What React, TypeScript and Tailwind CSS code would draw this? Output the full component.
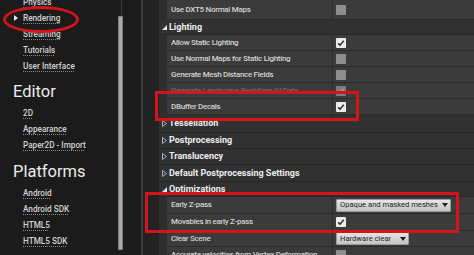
import React from 'react';

type Row =
  | { kind: 'header'; label: string; open?: boolean; h: number }
  | { kind: 'prop'; label: string; h: number; value?: 'on' | 'off' | 'dim' | 'none'; faded?: boolean; dropdown?: string; ddWidth?: number };

const rows: Row[] = [
  { kind: 'prop', label: 'Use DXT5 Normal Maps', h: 20, value: 'off' },
  { kind: 'header', label: 'Lighting', open: true, h: 15 },
  { kind: 'prop', label: 'Allow Static Lighting', h: 16, value: 'on' },
  { kind: 'prop', label: 'Use Normal Maps for Static Lighting', h: 16, value: 'off' },
  { kind: 'prop', label: 'Generate Mesh Distance Fields', h: 16, value: 'off' },
  { kind: 'prop', label: 'Generate Landscape Real-time GI Data', h: 16, value: 'dim', faded: true },
  { kind: 'prop', label: 'DBuffer Decals', h: 16, value: 'on' },
  { kind: 'header', label: 'Tessellation', h: 18 },
  { kind: 'header', label: 'Postprocessing', h: 16 },
  { kind: 'header', label: 'Translucency', h: 16 },
  { kind: 'header', label: 'Default Postprocessing Settings', h: 17 },
  { kind: 'header', label: 'Optimizations', open: true, h: 15 },
  { kind: 'prop', label: 'Early Z-pass', h: 17, dropdown: 'Opaque and masked meshes', ddWidth: 115 },
  { kind: 'prop', label: 'Movables in early Z-pass', h: 17, value: 'on' },
  { kind: 'prop', label: 'Clear Scene', h: 16, dropdown: 'Hardware clear', ddWidth: 73 },
  { kind: 'prop', label: 'Accurate velocities from Vertex Deformation', h: 16, value: 'off' },
];

const Check = ({ state }: { state: 'on' | 'off' | 'dim' }) => {
  if (state === 'off') return <div className="w-[10px] h-[10px] bg-[#8e8e8e] rounded-[1px]" />;
  return (
    <div className={`w-[10px] h-[10px] rounded-[1px] flex items-center justify-center ${state === 'on' ? 'bg-[#ececec]' : 'bg-[#7c7c7c]'}`}>
      <svg width="8" height="8" viewBox="0 0 8 8">
        <path d="M1.2 4.4 L3 6.2 L6.8 1.8" fill="none" stroke={state === 'on' ? '#2a2a2a' : '#a0a0a0'} strokeWidth="1.5" />
      </svg>
    </div>
  );
};

const SideItem = ({ label, arrow }: { label: string; arrow?: boolean }) => (
  <div className="h-[16px] shrink-0 flex items-center relative pl-[23px]">
    {arrow && (
      <svg className="absolute left-[14px] top-[5px]" width="4" height="6" viewBox="0 0 4 6">
        <path d="M0 0 L4 3 L0 6 Z" fill="#e8e8e8" />
      </svg>
    )}
    <span className="text-[8.2px] font-medium text-[#d2d2d2] underline decoration-dotted decoration-[#8a8a8a] underline-offset-[2px]">{label}</span>
  </div>
);

const Heading = ({ label, mt }: { label: string; mt: string }) => (
  <div className={`h-[25px] shrink-0 flex items-center pl-[13px] ${mt}`}>
    <span className="text-[16.5px] leading-none text-[#ececec]">{label}</span>
  </div>
);

export default function App() {
  return (
    <div className="w-[474px] h-[255px] overflow-hidden flex bg-[#1d1d1d] relative" style={{ fontFamily: 'Roboto, "Noto Sans", sans-serif' }}>
      {/* sidebar */}
      <div className="w-[141px] flex bg-[#1b1b1b] shrink-0">
        <div className="w-[117px] flex flex-col">
          <div className="-mt-[6px] shrink-0">
            <SideItem label="Physics" />
          </div>
          <SideItem label="Rendering" arrow />
          <SideItem label="Streaming" />
          <SideItem label="Tutorials" />
          <SideItem label="User Interface" />
          <Heading label="Editor" mt="mt-[6px]" />
          <SideItem label="2D" />
          <SideItem label="Appearance" />
          <SideItem label="Paper2D - Import" />
          <Heading label="Platforms" mt="mt-[7px]" />
          <SideItem label="Android" />
          <SideItem label="Android SDK" />
          <SideItem label="HTML5" />
          <SideItem label="HTML5 SDK" />
        </div>
        <div className="w-[6px] flex flex-col items-center">
          <div className="h-[16px] shrink-0 w-px bg-[#3a3a3a] ml-[3px]" />
          <div className="h-[234px] shrink-0 w-[5px] bg-[#aaaaaa] border border-[#7a7a7a]" />
        </div>
      </div>
      <div className="w-[2px] bg-[#3a3a3a] shrink-0" />
      <div className="w-[16px] bg-[#222222] shrink-0" />

      {/* details panel */}
      <div className="flex-1 flex flex-col bg-[#2e2e2e]">
        {rows.map((r, i) =>
          r.kind === 'header' ? (
            <div key={i} style={{ height: r.h }} className="shrink-0 flex items-center border-b border-[#262626] bg-[#313131] pl-[2px]">
              <span className="w-[6px] flex items-center justify-center mr-[2px]">
                {r.open ? (
                  <svg width="5" height="5" viewBox="0 0 5 5"><path d="M5 0 L5 5 L0 5 Z" fill="#e6e6e6" /></svg>
                ) : (
                  <svg width="5" height="7" viewBox="0 0 5 7"><path d="M0.5 0.5 L4.5 3.5 L0.5 6.5 Z" fill="none" stroke="#bdbdbd" strokeWidth="0.9" /></svg>
                )}
              </span>
              <span className="text-[9px] font-bold text-[#ededed] leading-none">{r.label}</span>
            </div>
          ) : (
            <div key={i} style={{ height: r.h }} className="shrink-0 flex pl-[8px] bg-[#2e2e2e]">
              <div className="flex-1 flex bg-[#3b3b3b] border-b border-[#2a2a2a]">
                <div className="w-[166px] flex items-center pl-[4px] border-r border-[#2c2c2c]">
                  <span className={`text-[8px] font-medium tracking-[-0.3px] leading-none whitespace-nowrap ${r.faded ? 'text-[#6c6c6c]' : 'text-[#d2d2d2]'}`}>{r.label}</span>
                </div>
                <div className="flex-1 flex items-center pl-[3px]">
                  {r.dropdown ? (
                    <div style={{ width: r.ddWidth }} className="h-[13px] flex items-center justify-between pl-[3px] pr-[2px] rounded-[1px] bg-gradient-to-b from-[#e6e6e6] to-[#c4c4c4] border border-[#9a9a9a]">
                      <span className="text-[7.6px] leading-none text-[#1e1e1e] whitespace-nowrap">{r.dropdown}</span>
                      <svg width="6" height="4" viewBox="0 0 6 4"><path d="M0 0 L6 0 L3 4 Z" fill="#1e1e1e" /></svg>
                    </div>
                  ) : r.value && r.value !== 'none' ? (
                    <Check state={r.value} />
                  ) : null}
                </div>
              </div>
            </div>
          )
        )}
      </div>

      {/* red annotations */}
      <div className="absolute left-[3px] top-[6px] w-[76px] h-[27px] rounded-[50%] border-[3px] border-[#d3141c]" />
      <div className="absolute left-[155px] top-[91px] w-[204px] h-[30px] border-[3px] border-[#d3141c]" />
      <div className="absolute left-[145px] top-[192px] w-[314px] h-[41px] border-[3px] border-[#d3141c]" />
    </div>
  );
}
